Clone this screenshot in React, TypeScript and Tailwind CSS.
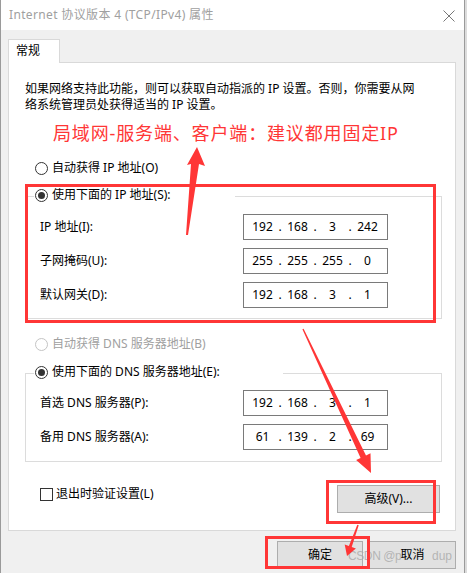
import React from "react";

const Radio = ({ checked, disabled }: { checked?: boolean; disabled?: boolean }) => {
  return (
    <span
      className={
        disabled
          ? "w-[13px] h-[13px] rounded-full border border-[#c4c4c4] bg-white flex items-center justify-center"
          : "w-[13px] h-[13px] rounded-full border border-[#333] bg-white flex items-center justify-center"
      }
    >
      {checked && <span className="w-[7px] h-[7px] rounded-full bg-[#333]" />}
    </span>
  );
};

const IpField = ({ parts }: { parts: string[] }) => {
  return (
    <div className="w-[145px] h-[26px] border border-[#7a7a7a] bg-white flex items-center pl-[5px] text-[12px] leading-[16px] text-black">
      {parts.map((p, i) => (
        <React.Fragment key={i}>
          <span className="w-[27px] text-center">{p}</span>
          {i < 3 && <span className="w-[8px] text-center">.</span>}
        </React.Fragment>
      ))}
    </div>
  );
};

const Row = ({ label, parts }: { label: string; parts: string[] }) => {
  return (
    <div className="flex items-center h-[26px]">
      <span className="w-[203px] text-[12px] leading-[16px]">{label}</span>
      <IpField parts={parts} />
    </div>
  );
};

const App = () => {
  return (
    <div className="relative w-[467px] h-[573px] overflow-hidden flex bg-[#dcdcdc] font-['Noto_Sans','Noto_Sans_CJK_SC',sans-serif] text-black">
      <div className="w-[465px] h-full flex flex-col border-x border-[#9a9a9a]">
        {/* title bar */}
        <div className="h-[30px] bg-white flex items-center justify-between pl-[8px] pr-[9px]">
          <span className="text-[12px] leading-[16px] tracking-[0.35px] text-[#a0a0a0]">Internet 协议版本 4 (TCP/IPv4) 属性</span>
          <svg width="12" height="12" viewBox="0 0 12 12" className="mt-[1px]">
            <path d="M0.5 0.5 L11.5 11.5 M11.5 0.5 L0.5 11.5" stroke="#777" strokeWidth="1" fill="none" />
          </svg>
        </div>

        {/* body */}
        <div className="flex-1 bg-[#f0f0f0] pl-[7px] pt-[9px]">
          <div className="relative z-10 w-[52px] h-[24px] bg-white border border-b-0 border-[#d9d9d9] pl-[7px] pt-[3px] text-[12px] leading-[16px]">
            常规
          </div>
          <div className="-mt-[1px] w-[448px] h-[469px] border border-[#d9d9d9] bg-white pl-[16px] pt-[18px] flex flex-col">
            <p className="text-[12px] leading-[16px] w-[400px]">
              如果网络支持此功能，则可以获取自动指派的 IP 设置。否则，你需要从网
              <br />
              络系统管理员处获得适当的 IP 设置。
            </p>

            <div className="mt-[8px] ml-[28px] h-[24px] text-[18px] leading-[24px] tracking-[0.85px] text-[#ff3636] whitespace-nowrap">
              局域网-服务端、客户端：建议都用固定IP
            </div>

            <div className="mt-[15px] ml-[10px] h-[16px] flex items-center gap-[4px] text-[12px] leading-[16px]">
              <Radio />
              <span>自动获得 IP 地址(O)</span>
            </div>

            {/* static ip group */}
            <div className="relative mt-[20px] w-[417px] h-[123px] border border-[#dcdcdc] pl-[14px] pt-[17px] flex flex-col gap-[8px]">
              <div className="absolute -top-[10px] left-[8px] w-[201px] h-[16px] bg-white flex items-center gap-[4px] pl-[1px] text-[12px] leading-[16px]">
                <Radio checked />
                <span>使用下面的 IP 地址(S):</span>
              </div>
              <Row label="IP 地址(I):" parts={["192", "168", "3", "242"]} />
              <Row label="子网掩码(U):" parts={["255", "255", "255", "0"]} />
              <Row label="默认网关(D):" parts={["192", "168", "3", "1"]} />
            </div>

            <div className="mt-[17px] ml-[10px] h-[16px] flex items-center gap-[4px] text-[12px] leading-[16px] text-[#a0a0a0]">
              <Radio disabled />
              <span>自动获得 DNS 服务器地址(B)</span>
            </div>

            {/* dns group */}
            <div className="relative mt-[21px] w-[417px] h-[89px] border border-[#dcdcdc] pl-[14px] pt-[16px] flex flex-col gap-[8px]">
              <div className="absolute -top-[10px] left-[8px] w-[249px] h-[16px] bg-white flex items-center gap-[4px] pl-[1px] text-[12px] leading-[16px]">
                <Radio checked />
                <span>使用下面的 DNS 服务器地址(E):</span>
              </div>
              <Row label="首选 DNS 服务器(P):" parts={["192", "168", "3", "1"]} />
              <Row label="备用 DNS 服务器(A):" parts={["61", "139", "2", "69"]} />
            </div>

            <div className="mt-[23px] flex items-start justify-between pr-[15px]">
              <div className="mt-[1px] ml-[15px] h-[16px] flex items-center gap-[3px] text-[12px] leading-[16px]">
                <span className="w-[13px] h-[13px] border border-[#333] bg-white" />
                <span>退出时验证设置(L)</span>
              </div>
              <button className="w-[103px] h-[28px] bg-[#e1e1e1] border border-[#adadad] text-[12px] leading-[16px]">
                高级(V)...
              </button>
            </div>
          </div>

          <div className="mt-[10px] flex justify-end gap-[6px] pr-[8px]">
            <button className="w-[86px] h-[28px] bg-[#e1e1e1] border border-[#adadad] text-[12px] leading-[16px]">确定</button>
            <button className="w-[87px] h-[28px] bg-[#e1e1e1] border border-[#adadad] text-[12px] leading-[16px]">取消</button>
          </div>
        </div>
      </div>

      {/* watermark */}
      <span className="absolute left-[348px] top-[548px] text-[12px] leading-[16px] tracking-[-0.4px] font-['Liberation_Sans',sans-serif] text-[#a8a8a8]/80">
        CSDN @p
      </span>
      <span className="absolute left-[432px] top-[548px] text-[12px] leading-[16px] font-['Liberation_Sans',sans-serif] text-[#a8a8a8]/80">
        dup
      </span>

      {/* annotations */}
      <svg className="absolute inset-0 pointer-events-none" width="467" height="573" viewBox="0 0 467 573">
        <g fill="none" stroke="#ff3636" strokeWidth="3">
          <rect x="26.5" y="185.5" width="408" height="136" />
          <rect x="327.5" y="481.5" width="107" height="41" />
          <rect x="266.5" y="537.5" width="102" height="30" />
        </g>
        <g fill="#ff3636">
          <polygon points="197,147 205,166 199,164 188,235 186,235 191,164 187,165" />
          <polygon points="302.4,329.3 303.6,328.7 366,455.4 370.5,453.3 371,473 356.1,460.1 360.6,458" />
          <polygon points="357.3,524.8 358.7,525.2 351.7,547.1 355.9,548.6 347,556 344.7,544.6 348.9,546.1" />
        </g>
      </svg>
    </div>
  );
};

export default App;
